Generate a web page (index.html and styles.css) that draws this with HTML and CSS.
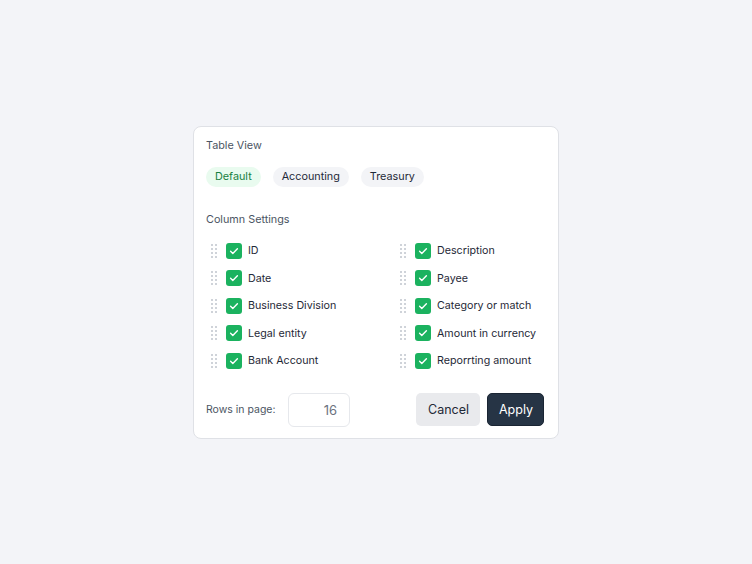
FILE: index.html
```html
<!DOCTYPE html>
<html>
<head>
<title>Table View</title>
<meta charset="UTF-8">
<meta name="viewport" content="width=device-width, initial-scale=1.0">
<link rel="stylesheet" href="styles.css">
</head>
<body>
<div class="card">
  <div class="section-title">Table View</div>
  <div class="pills">
    <span class="pill active">Default</span>
    <span class="pill">Accounting</span>
    <span class="pill">Treasury</span>
  </div>

  <div class="section-title cols-title">Column Settings</div>
  <div class="columns">
    <div class="col-item"><span class="handle"></span><span class="check"><svg viewBox="0 0 16 16"><path d="M4.6 8.3l2.2 2.1 4.6-4.6"/></svg></span><span class="label">ID</span></div>
    <div class="col-item"><span class="handle"></span><span class="check"><svg viewBox="0 0 16 16"><path d="M4.6 8.3l2.2 2.1 4.6-4.6"/></svg></span><span class="label">Description</span></div>
    <div class="col-item"><span class="handle"></span><span class="check"><svg viewBox="0 0 16 16"><path d="M4.6 8.3l2.2 2.1 4.6-4.6"/></svg></span><span class="label">Date</span></div>
    <div class="col-item"><span class="handle"></span><span class="check"><svg viewBox="0 0 16 16"><path d="M4.6 8.3l2.2 2.1 4.6-4.6"/></svg></span><span class="label">Payee</span></div>
    <div class="col-item"><span class="handle"></span><span class="check"><svg viewBox="0 0 16 16"><path d="M4.6 8.3l2.2 2.1 4.6-4.6"/></svg></span><span class="label">Business Division</span></div>
    <div class="col-item"><span class="handle"></span><span class="check"><svg viewBox="0 0 16 16"><path d="M4.6 8.3l2.2 2.1 4.6-4.6"/></svg></span><span class="label">Category or match</span></div>
    <div class="col-item"><span class="handle"></span><span class="check"><svg viewBox="0 0 16 16"><path d="M4.6 8.3l2.2 2.1 4.6-4.6"/></svg></span><span class="label">Legal entity</span></div>
    <div class="col-item"><span class="handle"></span><span class="check"><svg viewBox="0 0 16 16"><path d="M4.6 8.3l2.2 2.1 4.6-4.6"/></svg></span><span class="label">Amount in currency</span></div>
    <div class="col-item"><span class="handle"></span><span class="check"><svg viewBox="0 0 16 16"><path d="M4.6 8.3l2.2 2.1 4.6-4.6"/></svg></span><span class="label">Bank Account</span></div>
    <div class="col-item"><span class="handle"></span><span class="check"><svg viewBox="0 0 16 16"><path d="M4.6 8.3l2.2 2.1 4.6-4.6"/></svg></span><span class="label">Reporrting amount</span></div>
  </div>

  <div class="footer">
    <span class="rows-label">Rows in page:</span>
    <div class="rows-input">16</div>
    <div class="actions">
      <button class="btn btn-cancel">Cancel</button>
      <button class="btn btn-apply">Apply</button>
    </div>
  </div>
</div>
</body>
</html>
```

FILE: styles.css
```css
html, body {
    height: 100%;
}
body {
    margin: 0;
    background: #f3f4f8;
    font-family: Inter, "Noto Sans", sans-serif;
    color: #1f2937;
    display: flex;
    align-items: center;
    justify-content: center;
}
.card {
    width: 366px;
    box-sizing: border-box;
    background: #fff;
    border: 1px solid #dfe1e6;
    border-radius: 8px;
    padding: 11px 14px 11px 12px;
}
.section-title {
    font-size: 10.8px;
    line-height: 16px;
    color: #4b5563;
}
.pills {
    display: flex;
    gap: 12px;
    margin-top: 13px;
}
.pill {
    height: 20px;
    line-height: 20px;
    padding: 0 9px;
    border-radius: 10px;
    background: #f3f4f7;
    font-size: 10.8px;
    color: #1f2937;
}
.pill.active {
    background: #e9fbef;
    color: #17803f;
}
.cols-title {
    margin-top: 25px;
}
.columns {
    display: grid;
    grid-template-columns: 189px 1fr;
    row-gap: 11.5px;
    margin-top: 15px;
}
.col-item {
    display: flex;
    align-items: center;
    height: 16px;
    padding-left: 5px;
}
.handle {
    width: 6px;
    height: 14px;
    background-image: radial-gradient(circle, #cfd3d9 0.9px, transparent 1.1px);
    background-size: 4px 4px;
    background-position: -1px -1px;
    margin-right: 9px;
}
.check {
    width: 16px;
    height: 16px;
    border-radius: 3px;
    background: #1bb25f;
    display: flex;
    margin-right: 6px;
}
.check svg {
    width: 16px;
    height: 16px;
    fill: none;
    stroke: #fff;
    stroke-width: 1.4;
    stroke-linecap: round;
    stroke-linejoin: round;
}
.label {
    font-size: 10.7px;
    color: #1f2937;
}
.footer {
    display: flex;
    align-items: center;
    margin-top: 24px;
}
.rows-label {
    font-size: 10.5px;
    color: #4b5563;
    width: 82px;
}
.rows-input {
    width: 62px;
    height: 34px;
    box-sizing: border-box;
    border: 1px solid #e6e8ec;
    border-radius: 6px;
    text-align: right;
    padding-right: 12px;
    line-height: 32px;
    font-size: 13px;
    color: #6b7280;
}
.actions {
    margin-left: auto;
    display: flex;
    gap: 7px;
}
.btn {
    height: 33px;
    border-radius: 5px;
    font-family: Inter, "Noto Sans", sans-serif;
    font-size: 12.5px;
    border: 1px solid transparent;
    padding: 0 11px;
    cursor: pointer;
}
.btn-cancel {
    background: #e9eaed;
    color: #1f2937;
    width: 64px;
}
.btn-apply {
    background: #263445;
    border-color: #1a2533;
    color: #fff;
    width: 57px;
}
```
